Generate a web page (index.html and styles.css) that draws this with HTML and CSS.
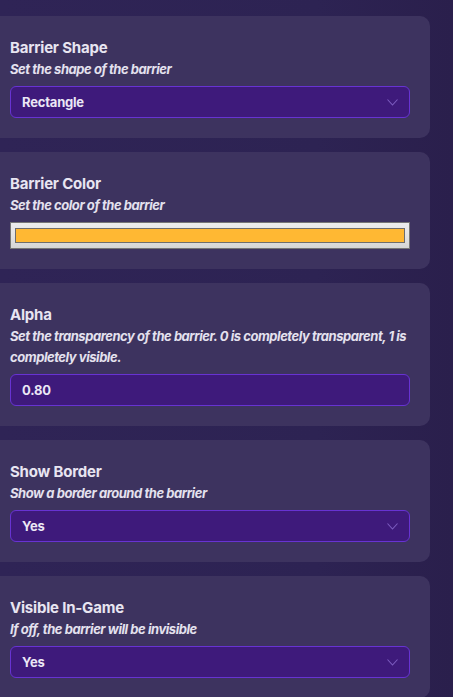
FILE: index.html
```html
<!DOCTYPE html>
<html lang="en">
<head>
<meta charset="utf-8">
<title>Barrier Options</title>
<link rel="stylesheet" href="styles.css">
</head>
<body>
<div class="panel">
  <section class="card">
    <h2 class="title">Barrier Shape</h2>
    <p class="desc">Set the shape of the barrier</p>
    <div class="select">
      <span class="value">Rectangle</span>
      <svg class="chev" width="11" height="7" viewBox="0 0 11 7"><path d="M0.5 0.5 L5.5 6 L10.5 0.5" fill="none" stroke="#7c5cbf" stroke-width="1.1"/></svg>
    </div>
  </section>
  <section class="card">
    <h2 class="title">Barrier Color</h2>
    <p class="desc">Set the color of the barrier</p>
    <div class="color">
      <div class="swatch"></div>
    </div>
  </section>
  <section class="card">
    <h2 class="title">Alpha</h2>
    <p class="desc">Set the transparency of the barrier. 0 is completely transparent, 1 is completely visible.</p>
    <div class="input"><span class="value">0.80</span></div>
  </section>
  <section class="card">
    <h2 class="title">Show Border</h2>
    <p class="desc">Show a border around the barrier</p>
    <div class="select">
      <span class="value">Yes</span>
      <svg class="chev" width="11" height="7" viewBox="0 0 11 7"><path d="M0.5 0.5 L5.5 6 L10.5 0.5" fill="none" stroke="#7c5cbf" stroke-width="1.1"/></svg>
    </div>
  </section>
  <section class="card">
    <h2 class="title">Visible In-Game</h2>
    <p class="desc">If off, the barrier will be invisible</p>
    <div class="select">
      <span class="value">Yes</span>
      <svg class="chev" width="11" height="7" viewBox="0 0 11 7"><path d="M0.5 0.5 L5.5 6 L10.5 0.5" fill="none" stroke="#7c5cbf" stroke-width="1.1"/></svg>
    </div>
  </section>
</div>
</body>
</html>
```
FILE: styles.css
```css
html, body {
  margin: 0;
  padding: 0;
  height: 100%;
  overflow: hidden;
}
body {
  background: linear-gradient(90deg, #2f2456 0%, #2d2353 70%, #2a1f4c 100%);
  font-family: Inter, "Noto Sans", sans-serif;
  color: #e9e6f2;
}
.panel {
  display: flex;
  flex-direction: column;
  gap: 14px;
  padding-top: 16px;
  margin-left: -12px;
  width: 442px;
}
.card {
  background: #3d335f;
  border-radius: 10px;
  padding: 23px 20px 20px 22px;
}
.title {
  margin: 0;
  font-size: 15px;
  font-weight: 700;
  line-height: 17px;
  color: #e8e5f1;
  letter-spacing: -0.2px;
}
.desc {
  margin: 3px 0 6px;
  font-size: 13px;
  font-weight: 700;
  font-style: italic;
  line-height: 21px;
  color: #e4e1ee;
  letter-spacing: -0.45px;
}
.select, .input {
  box-sizing: border-box;
  height: 32px;
  background: #3e1a7b;
  border: 1px solid #6733d2;
  border-radius: 6px;
  display: flex;
  align-items: center;
  justify-content: space-between;
  padding: 0 11px 0 11px;
}
.value {
  font-size: 13px;
  font-weight: 700;
  color: #ebe7f5;
  letter-spacing: -0.2px;
}
.chev {
  display: block;
  margin-top: 1px;
}
.color {
  box-sizing: border-box;
  height: 27px;
  border: 1px solid #767676;
  background: linear-gradient(180deg, #ededed 0%, #e3e3e3 50%, #d5d5d5 100%);
  padding: 5px 4px;
}
.swatch {
  box-sizing: border-box;
  height: 15px;
  border: 1px solid #6d6d6d;
  background: #ffb833;
}
```
